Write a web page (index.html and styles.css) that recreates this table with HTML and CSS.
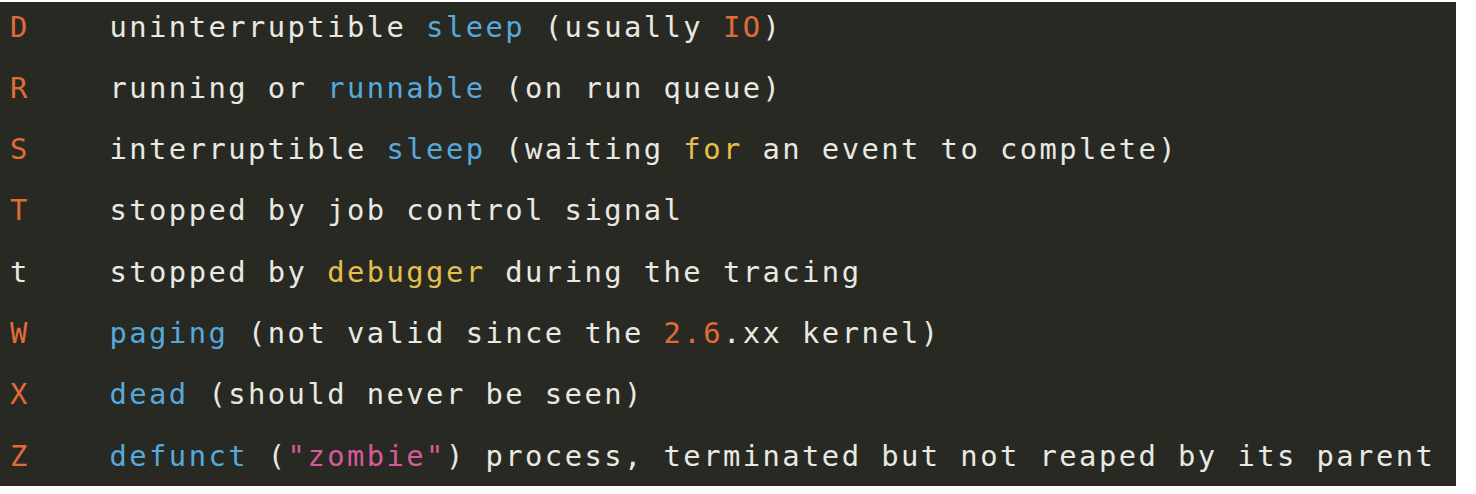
FILE: index.html
```html
<!DOCTYPE html>
<html lang="en">
<head>
<meta charset="utf-8">
<title>Process states</title>
<link rel="stylesheet" href="styles.css">
</head>
<body>
<pre class="code"><div class="row"><span class="key">D</span><span class="desc">uninterruptible <span class="kw">sleep</span> (usually <span class="num">IO</span>)</span></div><div class="row"><span class="key">R</span><span class="desc">running or <span class="kw">runnable</span> (on run queue)</span></div><div class="row"><span class="key">S</span><span class="desc">interruptible <span class="kw">sleep</span> (waiting <span class="ctl">for</span> an event to complete)</span></div><div class="row"><span class="key">T</span><span class="desc">stopped by job control signal</span></div><div class="row"><span class="key plain">t</span><span class="desc">stopped by <span class="ctl">debugger</span> during the tracing</span></div><div class="row"><span class="key">W</span><span class="desc"><span class="kw">paging</span> (not valid since the <span class="num">2.6</span>.xx kernel)</span></div><div class="row"><span class="key">X</span><span class="desc"><span class="kw">dead</span> (should never be seen)</span></div><div class="row"><span class="key">Z</span><span class="desc"><span class="kw">defunct</span> (<span class="str">"zombie"</span>) process, terminated but not reaped by its parent</span></div></pre>
</body>
</html>
```
FILE: styles.css
```css
html, body {
  margin: 0;
  padding: 0;
  background: #ffffff;
}

.code {
  margin: 2px 0 0 0;
  width: 1456px;
  height: 484px;
  box-sizing: border-box;
  padding: 10.6px 0 0 10px;
  overflow: hidden;
  background: #282923;
  color: #e9e9e3;
  font-family: "DejaVu Sans Mono", monospace;
  font-size: 28.8px;
  line-height: 28.8px;
  letter-spacing: 2.45px;
  white-space: pre;
}

.row {
  display: flex;
  height: 61.3px;
}

.key {
  width: 99.5px;
  flex: none;
  color: #e06c37;
}

.key.plain {
  color: #e9e9e3;
}

.kw {
  color: #57a9dd;
}

.num {
  color: #e06c37;
}

.ctl {
  color: #e5bf4b;
}

.str {
  color: #d65a9b;
}
```
